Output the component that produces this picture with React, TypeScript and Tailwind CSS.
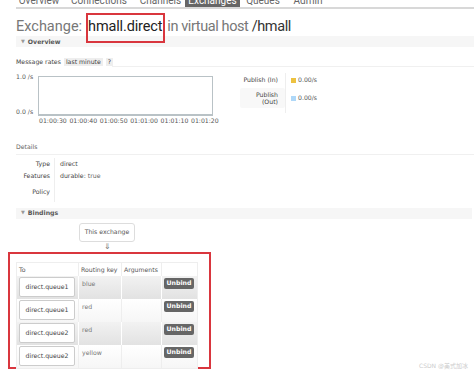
const tabs = [
  { label: "Overview", w: "w-[46px]" },
  { label: "Connections", w: "w-[74px]" },
  { label: "Channels", w: "w-[49px]" },
  { label: "Exchanges", w: "w-[55px]", active: true },
  { label: "Queues", w: "w-[46px]" },
  { label: "Admin", w: "w-[44px]" },
];

const bindings = [
  { queue: "direct.queue1", key: "blue", shaded: true },
  { queue: "direct.queue1", key: "red", shaded: false },
  { queue: "direct.queue2", key: "red", shaded: true },
  { queue: "direct.queue2", key: "yellow", shaded: false },
];

const times = ["01:00:30", "01:00:40", "01:00:50", "01:01:00", "01:01:10", "01:01:20"];

function SectionBar({ title }: { title: string }) {
  return (
    <div className="flex items-center h-[11px] bg-[#f6f6f6] pl-[5px] gap-[3px] text-[#555]">
      <span className="text-[5px] text-[#999]">▼</span>
      <span className="font-bold text-[6.2px]">{title}</span>
    </div>
  );
}

export default function App() {
  return (
    <div className="relative w-[474px] h-[375px] overflow-hidden bg-white text-[#444] font-['DejaVu_Sans',sans-serif] text-[6.2px]">
      <div className="pl-4">
        {/* top nav, cut off by the crop */}
        <div className="h-[9px] overflow-hidden border-b-[2px] border-[#d8d8d8]">
          <div className="flex mt-[-6px] font-['Roboto',sans-serif] text-[10px] text-[#666]">
            {tabs.map((t) => (
              <div
                key={t.label}
                className={`${t.w} h-[13px] flex items-center justify-center ${t.active ? "bg-[#666] text-white" : ""}`}
              >
                {t.label}
              </div>
            ))}
          </div>
        </div>

        {/* title */}
        <h1 className="h-[27px] pt-[8px] font-['Roboto',sans-serif] text-[14.5px] leading-[20px] text-[#777] whitespace-nowrap">
          Exchange:<span className="ml-[6px] tracking-[-0.15px] text-[#222]">hmall.direct</span>
          <span className="ml-[5px] tracking-[-0.4px]">
            in virtual host <span className="text-[#333]">/hmall</span>
          </span>
        </h1>

        <SectionBar title="Overview" />

        {/* message rates */}
        <div className="flex items-center gap-[2px] mt-[10px] h-[9px]">
          <span className="mr-[1px]">Message rates</span>
          <span className="bg-[#eee] px-[2px] leading-[8px]">last minute</span>
          <span className="bg-[#eee] px-[2px] leading-[8px] ml-[1px]">?</span>
        </div>
        <div className="border-t border-[#f0f0f0] ml-[96px]" />

        <div className="flex mt-[6px]">
          <div className="w-[222px]">
            <div className="flex">
              <div className="w-[22px] flex flex-col justify-between h-[42px] text-[#555]">
                <span className="leading-[7px]">1.0 /s</span>
                <span className="leading-[7px]">0.0 /s</span>
              </div>
              <div className="w-[175px] h-[40px] mt-[3px] border border-[#b9c2c6] border-b-[2px] bg-white" />
            </div>
            <div className="flex gap-[2.6px] pl-[23px] text-[#555]">
              {times.map((t) => (
                <span key={t}>{t}</span>
              ))}
            </div>
          </div>

          <div className="flex mt-[-2px]">
            <div className="w-[47px] flex flex-col items-end text-right text-[#444]">
              <div className="h-[14px] flex items-end pr-[7px] pb-[1px]">Publish (In)</div>
              <div className="w-[45px] h-[20px] mt-[3px] bg-[#f8f8f8] rounded-[2px] flex flex-col justify-center items-end pr-[7px] leading-[7px]">
                <span>Publish</span>
                <span>(Out)</span>
              </div>
            </div>
            <div className="border-l border-[#eee] h-[40px] mt-[2px]" />
            <div className="flex flex-col pl-[5px] text-[#555]">
              <div className="h-[14px] flex items-end gap-[2px] pb-[1px]">
                <span className="w-[5px] h-[5px] bg-[#edc240] mb-[1px]" />
                <span>0.00/s</span>
              </div>
              <div className="h-[20px] mt-[3px] flex items-center gap-[2px]">
                <span className="w-[5px] h-[5px] bg-[#afd8f8]" />
                <span>0.00/s</span>
              </div>
            </div>
          </div>
        </div>

        {/* details */}
        <div className="mt-[17px] text-[#666]">Details</div>
        <div className="border-t border-[#f0f0f0] mt-[2px]" />
        <div className="flex mt-[3px]">
          <div className="w-[38px] flex flex-col items-end pr-[4px] text-[#444]">
            <div className="h-[12px] flex items-center">Type</div>
            <div className="h-[12px] flex items-center">Features</div>
            <div className="h-[18px] flex items-end pb-[3px]">Policy</div>
          </div>
          <div className="border-l border-[#eee] h-[44px]" />
          <div className="flex flex-col pl-[5px] text-[#444]">
            <div className="h-[12px] flex items-center">direct</div>
            <div className="h-[12px] flex items-center">
              <span>durable:</span>
              <span className="ml-[2px] text-[#666]">true</span>
            </div>
          </div>
        </div>

        <div className="mt-[6px] mr-[2px]">
          <SectionBar title="Bindings" />
        </div>

        {/* this exchange */}
        <div className="ml-[63px] mt-[4px] w-[56px] h-[19px] border border-[#ddd] rounded-[3px] flex items-center justify-center text-[#555]">
          This exchange
        </div>
        <div className="ml-[88px] h-[10px] leading-[10px] text-[8px] text-[#777]">⇓</div>

        {/* bindings table, boxed in red */}
        <div className="ml-[-8px] w-[203px] h-[117px] border-2 border-[#d9363e] pt-[8px] pl-[6px]">
          <div className="w-[182px] border border-[#eee] text-[#555]">
            <div className="flex h-[13px] bg-white">
              <div className="w-[61px] pl-[2px] pt-[2px]">To</div>
              <div className="w-[43px] pl-[2px] pt-[2px] border-l border-[#eee]">Routing key</div>
              <div className="w-[40px] pl-[2px] pt-[2px] border-l border-[#eee]">Arguments</div>
              <div className="flex-1 border-l border-[#eee]" />
            </div>
            {bindings.map((b, i) => (
              <div
                key={i}
                className={`flex h-[23px] ${b.shaded ? "bg-gradient-to-b from-[#f2f2f2] to-[#e2e2e2]" : "bg-gradient-to-b from-white to-[#f6f6f6]"}`}
              >
                <div className="w-[61px] flex items-center pl-[2px]">
                  <div className="w-[56px] h-[20px] bg-white border border-[#ccc] rounded-[2px] flex items-center justify-center text-[#444]">
                    {b.queue}
                  </div>
                </div>
                <div className={`w-[43px] pl-[3px] pt-[3px] text-[#777] border-l ${b.shaded ? "border-white" : "border-[#eee]"}`}>{b.key}</div>
                <div className={`w-[40px] border-l ${b.shaded ? "border-white" : "border-[#eee]"}`} />
                <div className={`flex-1 pl-[2px] pt-[2px] border-l ${b.shaded ? "border-white" : "border-[#eee]"}`}>
                  <div className="w-[30px] h-[11px] rounded-[2px] bg-[#666] text-white font-bold flex items-center justify-center">
                    Unbind
                  </div>
                </div>
              </div>
            ))}
          </div>
        </div>
      </div>

      {/* annotation around exchange name */}
      <div className="absolute left-[86px] top-[13px] w-[79px] h-[30px] border-2 border-[#d9363e]" />

      {/* watermark */}
      <div className="absolute right-[6px] bottom-[5px] text-[6px] text-[#ccc] font-['DejaVu_Sans','Noto_Sans_CJK_SC',sans-serif]">
        CSDN @美式加冰
      </div>
    </div>
  );
}
